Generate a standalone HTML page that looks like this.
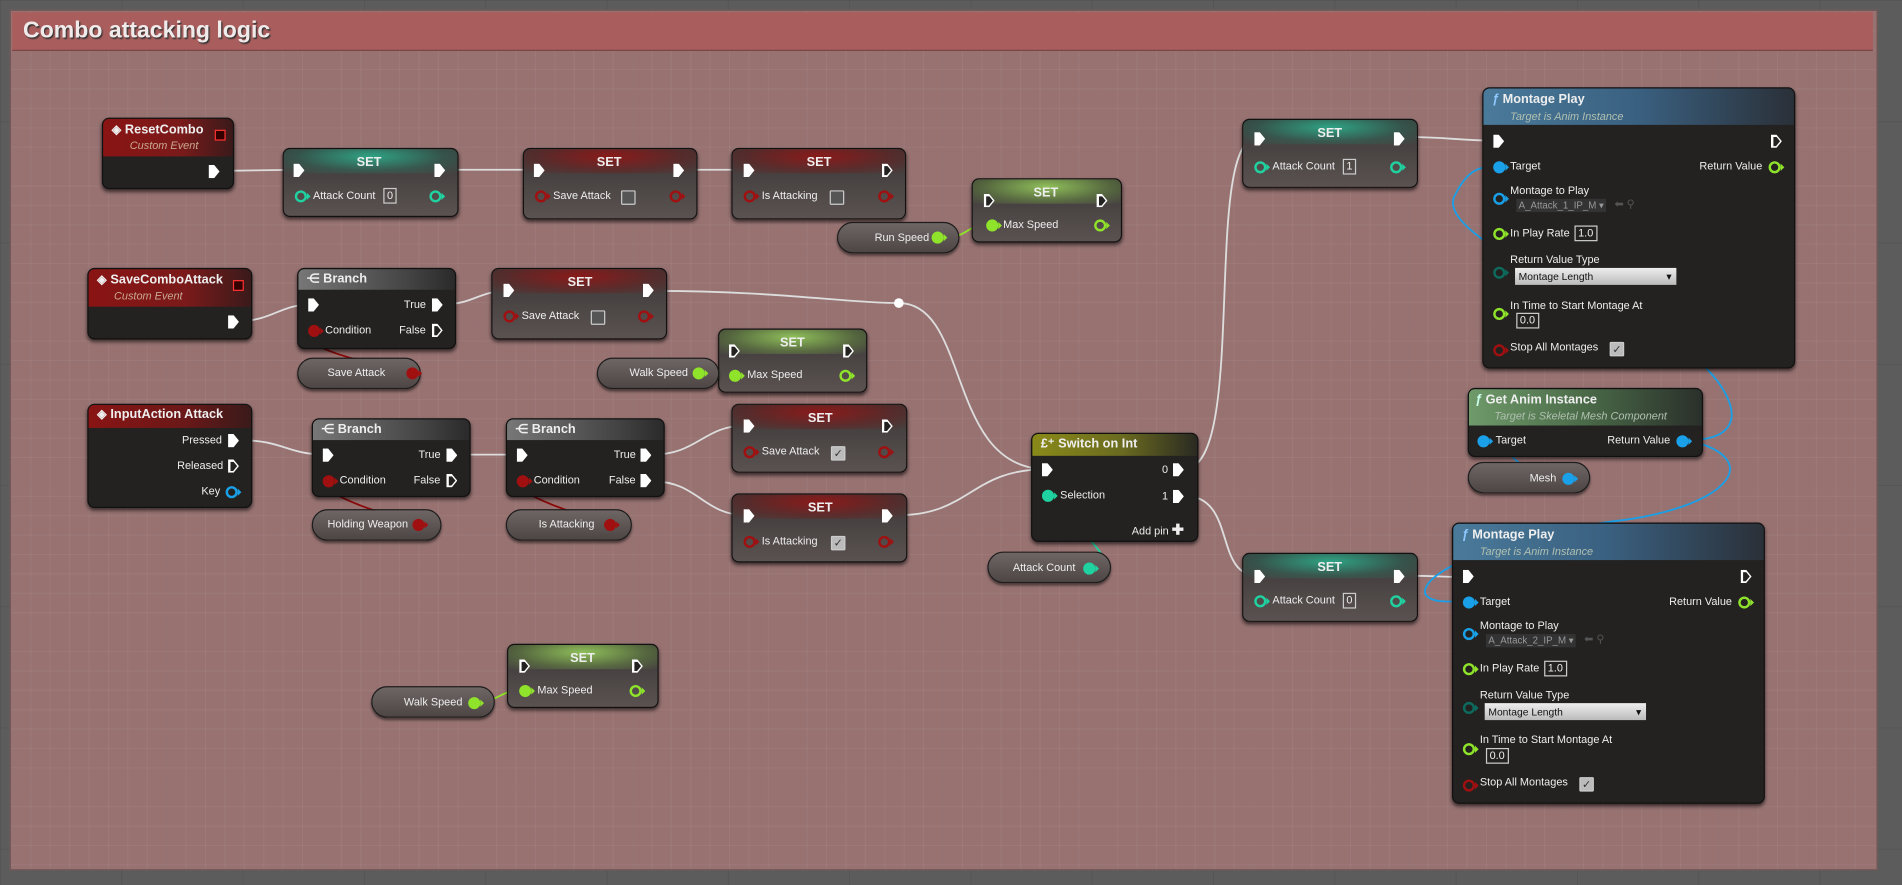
<!DOCTYPE html>
<html><head><meta charset="utf-8"><style>
html,body{margin:0;padding:0;width:1902px;height:885px;overflow:hidden;background:#5c5c5c}
#c{position:absolute;left:0;top:0;width:1568px;height:730px;transform:scale(1.2130,1.2123);transform-origin:0 0;font-family:"Liberation Sans",sans-serif;color:#eee;font-size:9px;
background:#5c5c5c;background-image:linear-gradient(#555 1px,transparent 1px),linear-gradient(90deg,#555 1px,transparent 1px);background-size:100px 100px}
#cm{position:absolute;left:8px;top:8px;width:1538px;height:708px;background:#977271;border:1px solid #6e5554;
background-image:linear-gradient(rgba(255,255,255,.05) 1px,transparent 1px),linear-gradient(90deg,rgba(255,255,255,.05) 1px,transparent 1px),linear-gradient(rgba(0,0,0,.05) 1px,transparent 1px),linear-gradient(90deg,rgba(0,0,0,.05) 1px,transparent 1px);
background-size:16px 16px,16px 16px,128px 128px,128px 128px;background-color:#977271}
#ch{position:absolute;left:10px;top:10px;width:1534px;height:31px;background:#a95e5d;border-bottom:1px solid #7a4545}
#ch span{position:absolute;left:9px;top:5px;font-size:19px;font-weight:bold;color:#f0eaea;text-shadow:1px 1px 1px #333}
svg.w{position:absolute;left:0;top:0;width:1568px;height:730px}
.n{position:absolute;background:#232221;border-radius:6px;box-shadow:0 2px 3px rgba(0,0,0,.6);border:1px solid #111;overflow:hidden}
.s{background:linear-gradient(#3b3837,#5a5251);}
.g{position:absolute;height:24px;border-radius:13px;background:linear-gradient(#6e6665,#4d4645);border:1px solid #1d1d1d;box-shadow:0 2px 2px rgba(0,0,0,.5)}
.t{position:absolute;white-space:nowrap}
.b{font-weight:bold;font-size:10.5px}
.i{font-style:italic;color:#c8a98f;font-size:9px}
.ex{position:absolute;width:9px;height:11px;background:#fff;clip-path:polygon(0 0,50% 0,100% 50%,50% 100%,0 100%)}
.ex.o::after{content:"";position:absolute;left:1.5px;top:1.5px;width:6px;height:8px;background:#232221;clip-path:polygon(0 0,45% 0,100% 50%,45% 100%,0 100%)}
.dp{position:absolute;width:6px;height:6px;border-radius:50%;border:2px solid}
.dp.f{background:currentColor}
.dp::after{content:"";position:absolute;left:8px;top:0px;border-left:3px solid currentColor;border-top:3px solid transparent;border-bottom:3px solid transparent}
.bx{position:absolute;border:1px solid #ccc;padding:0 2px;font-size:9px;line-height:11px;height:11px}
.cb{position:absolute;width:10px;height:10px;border:1px solid #ccc;background:#555;border-radius:1px}
.cb.k{background:#bbb;color:#333;font-size:9px;line-height:10px;text-align:center}
.hd{position:absolute;left:0;top:0;right:0}
.teal{color:#1fd2a0}.red{color:#a01010}.grn{color:#8fe32a}.blu{color:#1aa0e8}.dtl{color:#0d6b5e}
</style></head><body><div id="c">
<div id="cm"></div><div id="ch"><span>Combo attacking logic</span></div>
<svg class="w" viewBox="0 0 1568 730" fill="none">
<g stroke="#ddd" stroke-width="1.5">
<path d="M180 141 L246 140"/><path d="M368 140 L443 140"/><path d="M565 140 L615 140"/>
<path d="M195 265 C225 265 230 251 258 251"/>
<path d="M366 251 C390 251 395 240 418 240"/>
<path d="M540 240 C640 240 700 250 741 250 C800 250 780 387 863 387"/>
<path d="M196 363 C235 363 235 375 270 375"/>
<path d="M377 375 L430 375"/>
<path d="M538 375 C575 375 580 351 615 351"/>
<path d="M538 397 C575 397 580 425 615 425"/>
<path d="M740 425 C800 425 800 387 863 387"/>
<path d="M976 387 C1030 387 990 113 1037 113"/>
<path d="M976 409 C1020 409 1000 475 1037 475"/>
<path d="M1160 113 C1195 113 1200 116 1235 116"/>
<path d="M1160 475 C1185 475 1190 476 1210 476"/>
</g>
<circle cx="741" cy="250" r="4" fill="#fff"/>
<g stroke-width="1.5">
<path stroke="#8fe32a" d="M777 196 C800 196 795 185 817 185"/>
<path stroke="#8fe32a" d="M580 308 C592 308 592 310 605 310"/>
<path stroke="#8fe32a" d="M393 579 C412 579 412 569 432 569"/>
<path stroke="#8a0a0a" d="M344 307 C300 300 240 285 258 272"/>
<path stroke="#8a0a0a" d="M349 432 C310 425 250 400 270 396"/>
<path stroke="#8a0a0a" d="M507 432 C470 425 410 400 430 396"/>
<path stroke="#1fd2a0" d="M902 468 C930 468 880 430 863 408"/>
<path stroke="#1aa0e8" d="M1392 363 C1460 363 1420 300 1360 270 C1300 240 1180 190 1200 160 C1210 140 1220 137 1235 137"/>
<path stroke="#1aa0e8" d="M1392 363 C1460 380 1420 420 1330 430 C1250 440 1170 470 1175 490 C1180 498 1195 496 1210 496"/>
<path stroke="#1aa0e8" d="M1297 394 C1240 394 1250 363 1222 363"/>
</g>
</svg>

<!-- ResetCombo -->
<div class="n" style="left:84px;top:97px;width:107px;height:57px"><div class="hd" style="height:31px;background:linear-gradient(90deg,#8a1414,#7a1a1a 60%,#3a1a1a)"></div></div>
<div class="t b" style="left:92px;top:101px">◈ ResetCombo</div><div class="t i" style="left:107px;top:115px">Custom Event</div>
<div style="position:absolute;left:177px;top:107px;width:7px;height:7px;background:#300;border:1.5px solid #f33"></div>
<div class="ex" style="left:172px;top:136px"></div>

<!-- SaveComboAttack -->
<div class="n" style="left:72px;top:221px;width:134px;height:57px"><div class="hd" style="height:31px;background:linear-gradient(90deg,#8a1414,#7a1a1a 60%,#3a1a1a)"></div></div>
<div class="t b" style="left:80px;top:225px">◈ SaveComboAttack</div><div class="t i" style="left:94px;top:239px">Custom Event</div>
<div style="position:absolute;left:192px;top:231px;width:7px;height:7px;background:#300;border:1.5px solid #f33"></div>
<div class="ex" style="left:188px;top:260px"></div>

<!-- InputAction -->
<div class="n" style="left:72px;top:333px;width:134px;height:84px"><div class="hd" style="height:19px;background:linear-gradient(90deg,#8a1414,#6a1818 60%,#3a1a1a)"></div></div>
<div class="t b" style="left:80px;top:336px">◈ InputAction Attack</div>
<div class="t" style="left:150px;top:358px">Pressed</div><div class="ex" style="left:188px;top:358px"></div>
<div class="t" style="left:146px;top:379px">Released</div><div class="ex o" style="left:188px;top:379px"></div>
<div class="t" style="left:166px;top:400px">Key</div><div class="dp blu" style="left:186px;top:401px"></div>

<!-- SET nodes -->
<div class="n s" style="left:233px;top:122px;width:143px;height:55px"><div class="hd" style="height:20px;background:radial-gradient(ellipse at 50% 30%,#2fa384,rgba(40,120,100,.4) 60%,transparent)"></div></div>
<div class="t b" style="left:294px;top:128px">SET</div><div class="ex" style="left:242px;top:135px"></div><div class="ex" style="left:358px;top:135px"></div>
<div class="dp teal" style="left:243px;top:157px"></div><div class="t" style="left:258px;top:156px">Attack Count</div><div class="bx" style="left:316px;top:155px">0</div><div class="dp teal" style="left:354px;top:157px"></div>

<div class="n s" style="left:431px;top:122px;width:142px;height:57px"><div class="hd" style="height:20px;background:radial-gradient(ellipse at 50% 30%,#8a1a1a,rgba(120,20,20,.4) 60%,transparent)"></div></div>
<div class="t b" style="left:492px;top:128px">SET</div><div class="ex" style="left:440px;top:135px"></div><div class="ex" style="left:555px;top:135px"></div>
<div class="dp red" style="left:441px;top:157px"></div><div class="t" style="left:456px;top:156px">Save Attack</div><div class="cb" style="left:512px;top:157px"></div><div class="dp red" style="left:552px;top:157px"></div>

<div class="n s" style="left:603px;top:122px;width:142px;height:57px"><div class="hd" style="height:20px;background:radial-gradient(ellipse at 50% 30%,#8a1a1a,rgba(120,20,20,.4) 60%,transparent)"></div></div>
<div class="t b" style="left:665px;top:128px">SET</div><div class="ex" style="left:613px;top:135px"></div><div class="ex o" style="left:727px;top:135px"></div>
<div class="dp red" style="left:613px;top:157px"></div><div class="t" style="left:628px;top:156px">Is Attacking</div><div class="cb" style="left:684px;top:157px"></div><div class="dp red" style="left:724px;top:157px"></div>

<div class="n s" style="left:801px;top:147px;width:122px;height:51px"><div class="hd" style="height:20px;background:radial-gradient(ellipse at 50% 30%,#8fbf5a,rgba(120,170,70,.4) 60%,transparent)"></div></div>
<div class="t b" style="left:852px;top:153px">SET</div><div class="ex o" style="left:811px;top:160px"></div><div class="ex o" style="left:904px;top:160px"></div>
<div class="dp f grn" style="left:813px;top:181px"></div><div class="t" style="left:827px;top:180px">Max Speed</div><div class="dp grn" style="left:902px;top:181px"></div>
<div class="g" style="left:690px;top:183px;width:99px"></div><div class="t" style="left:721px;top:191px">Run Speed</div><div class="dp f grn" style="left:768px;top:191px"></div>

<!-- Branch 1 -->
<div class="n" style="left:245px;top:221px;width:129px;height:65px"><div class="hd" style="height:17px;background:linear-gradient(90deg,#777,#444 70%,#2a2a2a)"></div></div>
<div class="t b" style="left:253px;top:224px">⋲ Branch</div>
<div class="ex" style="left:254px;top:246px"></div><div class="t" style="left:333px;top:246px">True</div><div class="ex" style="left:356px;top:246px"></div>
<div class="dp f red" style="left:254px;top:268px"></div><div class="t" style="left:268px;top:267px">Condition</div><div class="t" style="left:329px;top:267px">False</div><div class="ex o" style="left:356px;top:267px"></div>
<div class="g" style="left:245px;top:295px;width:100px"></div><div class="t" style="left:270px;top:302px">Save Attack</div><div class="dp f red" style="left:335px;top:303px"></div>

<div class="n s" style="left:405px;top:221px;width:143px;height:57px"><div class="hd" style="height:20px;background:radial-gradient(ellipse at 50% 30%,#8a1a1a,rgba(120,20,20,.4) 60%,transparent)"></div></div>
<div class="t b" style="left:468px;top:227px">SET</div><div class="ex" style="left:415px;top:234px"></div><div class="ex" style="left:530px;top:234px"></div>
<div class="dp red" style="left:415px;top:256px"></div><div class="t" style="left:430px;top:255px">Save Attack</div><div class="cb" style="left:487px;top:256px"></div><div class="dp red" style="left:526px;top:256px"></div>

<div class="n s" style="left:592px;top:271px;width:121px;height:51px"><div class="hd" style="height:20px;background:radial-gradient(ellipse at 50% 30%,#8fbf5a,rgba(120,170,70,.4) 60%,transparent)"></div></div>
<div class="t b" style="left:643px;top:277px">SET</div><div class="ex o" style="left:601px;top:284px"></div><div class="ex o" style="left:695px;top:284px"></div>
<div class="dp f grn" style="left:601px;top:305px"></div><div class="t" style="left:616px;top:304px">Max Speed</div><div class="dp grn" style="left:692px;top:305px"></div>
<div class="g" style="left:492px;top:295px;width:99px"></div><div class="t" style="left:519px;top:302px">Walk Speed</div><div class="dp f grn" style="left:571px;top:303px"></div>

<!-- Branch 2,3 -->
<div class="n" style="left:257px;top:345px;width:129px;height:63px"><div class="hd" style="height:17px;background:linear-gradient(90deg,#777,#444 70%,#2a2a2a)"></div></div>
<div class="t b" style="left:265px;top:348px">⋲ Branch</div>
<div class="ex" style="left:266px;top:370px"></div><div class="t" style="left:345px;top:370px">True</div><div class="ex" style="left:368px;top:370px"></div>
<div class="dp f red" style="left:266px;top:392px"></div><div class="t" style="left:280px;top:391px">Condition</div><div class="t" style="left:341px;top:391px">False</div><div class="ex o" style="left:368px;top:391px"></div>
<div class="g" style="left:257px;top:420px;width:105px"></div><div class="t" style="left:270px;top:427px">Holding Weapon</div><div class="dp f red" style="left:340px;top:428px"></div>

<div class="n" style="left:417px;top:345px;width:129px;height:63px"><div class="hd" style="height:17px;background:linear-gradient(90deg,#777,#444 70%,#2a2a2a)"></div></div>
<div class="t b" style="left:425px;top:348px">⋲ Branch</div>
<div class="ex" style="left:426px;top:370px"></div><div class="t" style="left:506px;top:370px">True</div><div class="ex" style="left:528px;top:370px"></div>
<div class="dp f red" style="left:426px;top:392px"></div><div class="t" style="left:440px;top:391px">Condition</div><div class="t" style="left:502px;top:391px">False</div><div class="ex" style="left:528px;top:391px"></div>
<div class="g" style="left:417px;top:420px;width:102px"></div><div class="t" style="left:444px;top:427px">Is Attacking</div><div class="dp f red" style="left:498px;top:428px"></div>

<div class="n s" style="left:603px;top:333px;width:143px;height:55px"><div class="hd" style="height:20px;background:radial-gradient(ellipse at 50% 30%,#8a1a1a,rgba(120,20,20,.4) 60%,transparent)"></div></div>
<div class="t b" style="left:666px;top:339px">SET</div><div class="ex" style="left:613px;top:346px"></div><div class="ex o" style="left:727px;top:346px"></div>
<div class="dp red" style="left:613px;top:368px"></div><div class="t" style="left:628px;top:367px">Save Attack</div><div class="cb k" style="left:685px;top:368px">✓</div><div class="dp red" style="left:724px;top:368px"></div>

<div class="n s" style="left:603px;top:407px;width:143px;height:55px"><div class="hd" style="height:20px;background:radial-gradient(ellipse at 50% 30%,#8a1a1a,rgba(120,20,20,.4) 60%,transparent)"></div></div>
<div class="t b" style="left:666px;top:413px">SET</div><div class="ex" style="left:613px;top:420px"></div><div class="ex" style="left:727px;top:420px"></div>
<div class="dp red" style="left:613px;top:442px"></div><div class="t" style="left:628px;top:441px">Is Attacking</div><div class="cb k" style="left:685px;top:442px">✓</div><div class="dp red" style="left:724px;top:442px"></div>

<div class="n s" style="left:418px;top:531px;width:123px;height:51px"><div class="hd" style="height:20px;background:radial-gradient(ellipse at 50% 30%,#8fbf5a,rgba(120,170,70,.4) 60%,transparent)"></div></div>
<div class="t b" style="left:470px;top:537px">SET</div><div class="ex o" style="left:428px;top:544px"></div><div class="ex o" style="left:521px;top:544px"></div>
<div class="dp f grn" style="left:428px;top:565px"></div><div class="t" style="left:443px;top:564px">Max Speed</div><div class="dp grn" style="left:519px;top:565px"></div>
<div class="g" style="left:306px;top:566px;width:100px"></div><div class="t" style="left:333px;top:574px">Walk Speed</div><div class="dp f grn" style="left:386px;top:575px"></div>

<!-- Switch -->
<div class="n" style="left:850px;top:357px;width:136px;height:88px"><div class="hd" style="height:18px;background:linear-gradient(90deg,#8a8a1a,#6a6a20 55%,#2a2a22)"></div></div>
<div class="t b" style="left:858px;top:360px">£⁺ Switch on Int</div>
<div class="ex" style="left:859px;top:382px"></div><div class="t" style="left:958px;top:382px">0</div><div class="ex" style="left:967px;top:382px"></div>
<div class="dp f teal" style="left:859px;top:404px"></div><div class="t" style="left:874px;top:403px">Selection</div><div class="t" style="left:958px;top:404px">1</div><div class="ex" style="left:967px;top:404px"></div>
<div class="t" style="left:933px;top:430px">Add pin <b style="font-size:12px">✚</b></div>
<div class="g" style="left:814px;top:455px;width:100px"></div><div class="t" style="left:835px;top:463px">Attack Count</div><div class="dp f teal" style="left:893px;top:464px"></div>

<!-- SET attack count 1 / 0 -->
<div class="n s" style="left:1024px;top:98px;width:143px;height:55px"><div class="hd" style="height:20px;background:radial-gradient(ellipse at 50% 30%,#2fa384,rgba(40,120,100,.4) 60%,transparent)"></div></div>
<div class="t b" style="left:1086px;top:104px">SET</div><div class="ex" style="left:1034px;top:109px"></div><div class="ex" style="left:1149px;top:109px"></div>
<div class="dp teal" style="left:1034px;top:133px"></div><div class="t" style="left:1049px;top:132px">Attack Count</div><div class="bx" style="left:1107px;top:131px">1</div><div class="dp teal" style="left:1146px;top:133px"></div>

<div class="n s" style="left:1024px;top:456px;width:143px;height:55px"><div class="hd" style="height:20px;background:radial-gradient(ellipse at 50% 30%,#2fa384,rgba(40,120,100,.4) 60%,transparent)"></div></div>
<div class="t b" style="left:1086px;top:462px">SET</div><div class="ex" style="left:1034px;top:470px"></div><div class="ex" style="left:1149px;top:470px"></div>
<div class="dp teal" style="left:1034px;top:491px"></div><div class="t" style="left:1049px;top:490px">Attack Count</div><div class="bx" style="left:1107px;top:489px">0</div><div class="dp teal" style="left:1146px;top:491px"></div>

<!-- Montage Play 1 -->
<div class="n" style="left:1222px;top:72px;width:256px;height:230px"><div class="hd" style="height:30px;background:linear-gradient(90deg,#4a7a9a,#3a6080 50%,#2a3038)"></div></div>
<div class="t b" style="left:1230px;top:76px"><i style="color:#8fc8ff">ƒ</i> Montage Play</div><div class="t i" style="left:1245px;top:91px;color:#b0c0b0">Target is Anim Instance</div>
<div class="ex" style="left:1231px;top:111px"></div><div class="ex o" style="left:1460px;top:111px"></div>
<div class="dp f blu" style="left:1231px;top:133px"></div><div class="t" style="left:1245px;top:132px">Target</div><div class="t" style="left:1401px;top:132px">Return Value</div><div class="dp grn" style="left:1458px;top:133px"></div>
<div class="t" style="left:1245px;top:152px">Montage to Play</div><div class="dp blu" style="left:1231px;top:159px"></div>
<div class="t" style="left:1250px;top:164px;font-size:8px;color:#999;background:#333;padding:1px 2px">A_Attack_1_IP_M ▾</div><div class="t" style="left:1331px;top:163px;color:#555">⬅ ⚲</div>
<div class="dp grn" style="left:1231px;top:188px"></div><div class="t" style="left:1245px;top:187px">In Play Rate</div><div class="bx" style="left:1298px;top:186px">1.0</div>
<div class="t" style="left:1245px;top:209px">Return Value Type</div><div class="dp dtl" style="left:1231px;top:220px"></div>
<div class="t" style="left:1249px;top:221px;width:130px;height:14px;background:linear-gradient(#eee,#bbb);color:#111;font-size:8.5px;line-height:14px;padding-left:3px">Montage Length<span style="position:absolute;right:4px">▾</span></div>
<div class="t" style="left:1245px;top:247px">In Time to Start Montage At</div><div class="dp grn" style="left:1231px;top:254px"></div><div class="bx" style="left:1250px;top:258px">0.0</div>
<div class="dp red" style="left:1231px;top:284px"></div><div class="t" style="left:1245px;top:281px">Stop All Montages</div><div class="cb k" style="left:1327px;top:282px">✓</div>

<!-- Get Anim Instance -->
<div class="n" style="left:1210px;top:320px;width:192px;height:55px"><div class="hd" style="height:30px;background:linear-gradient(90deg,#6f9a6a,#4a6a48 50%,#2a302a)"></div></div>
<div class="t b" style="left:1216px;top:324px"><i style="color:#cfe">ƒ</i> Get Anim Instance</div><div class="t i" style="left:1232px;top:338px;color:#b0c0b0">Target is Skeletal Mesh Component</div>
<div class="dp f blu" style="left:1218px;top:359px"></div><div class="t" style="left:1233px;top:358px">Target</div><div class="t" style="left:1325px;top:358px">Return Value</div><div class="dp f blu" style="left:1382px;top:359px"></div>
<div class="g" style="left:1210px;top:381px;width:99px"></div><div class="t" style="left:1261px;top:389px">Mesh</div><div class="dp f blu" style="left:1288px;top:390px"></div>

<!-- Montage Play 2 -->
<div class="n" style="left:1197px;top:431px;width:256px;height:230px"><div class="hd" style="height:30px;background:linear-gradient(90deg,#4a7a9a,#3a6080 50%,#2a3038)"></div></div>
<div class="t b" style="left:1205px;top:435px"><i style="color:#8fc8ff">ƒ</i> Montage Play</div><div class="t i" style="left:1220px;top:450px;color:#b0c0b0">Target is Anim Instance</div>
<div class="ex" style="left:1206px;top:470px"></div><div class="ex o" style="left:1435px;top:470px"></div>
<div class="dp f blu" style="left:1206px;top:492px"></div><div class="t" style="left:1220px;top:491px">Target</div><div class="t" style="left:1376px;top:491px">Return Value</div><div class="dp grn" style="left:1433px;top:492px"></div>
<div class="t" style="left:1220px;top:511px">Montage to Play</div><div class="dp blu" style="left:1206px;top:518px"></div>
<div class="t" style="left:1225px;top:523px;font-size:8px;color:#999;background:#333;padding:1px 2px">A_Attack_2_IP_M ▾</div><div class="t" style="left:1306px;top:522px;color:#555">⬅ ⚲</div>
<div class="dp grn" style="left:1206px;top:547px"></div><div class="t" style="left:1220px;top:546px">In Play Rate</div><div class="bx" style="left:1273px;top:545px">1.0</div>
<div class="t" style="left:1220px;top:568px">Return Value Type</div><div class="dp dtl" style="left:1206px;top:579px"></div>
<div class="t" style="left:1224px;top:580px;width:130px;height:14px;background:linear-gradient(#eee,#bbb);color:#111;font-size:8.5px;line-height:14px;padding-left:3px">Montage Length<span style="position:absolute;right:4px">▾</span></div>
<div class="t" style="left:1220px;top:605px">In Time to Start Montage At</div><div class="dp grn" style="left:1206px;top:613px"></div><div class="bx" style="left:1225px;top:617px">0.0</div>
<div class="dp red" style="left:1206px;top:643px"></div><div class="t" style="left:1220px;top:640px">Stop All Montages</div><div class="cb k" style="left:1302px;top:641px">✓</div>
</div></body></html>
